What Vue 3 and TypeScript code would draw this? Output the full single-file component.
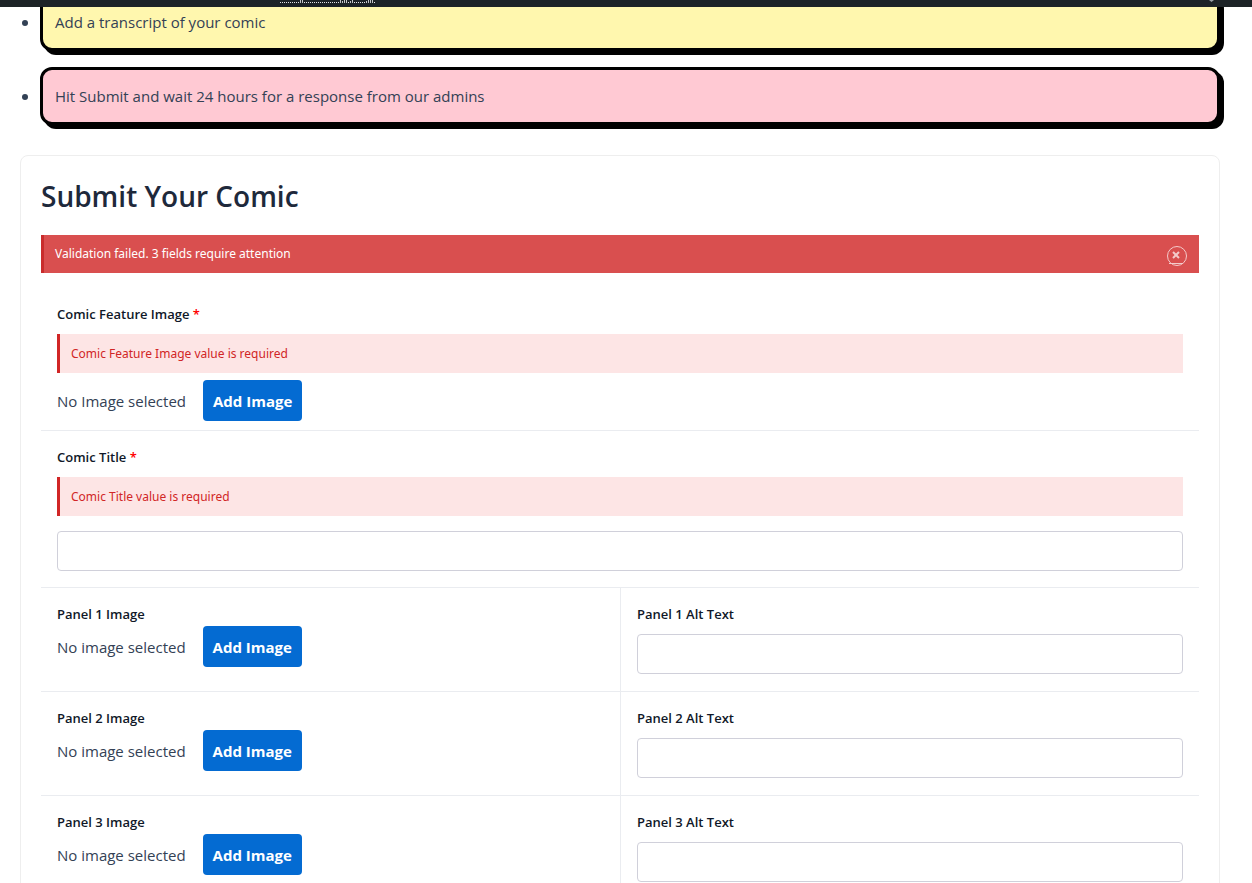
<script setup lang="ts">
import { ref } from 'vue'

interface Step { text: string; tone: string }

const steps: Step[] = [
  { text: 'Add a transcript of your comic', tone: 'yellow' },
  { text: 'Hit Submit and wait 24 hours for a response from our admins', tone: 'pink' },
]
const panels: number[] = [1, 2, 3]
const alertOpen = ref(true)
const title = ref('')
const altTexts = ref<string[]>(['', '', ''])
</script>

<template>
  <div class="page">
    <header class="adminbar">
      <svg class="bar-trace" width="96" height="7" viewBox="0 0 96 7" aria-hidden="true">
        <path d="M0 2.5H96" stroke="#e2e3e5" stroke-dasharray="1 1" />
        <path d="M20.5 0V3M22.5 0V3M60.5 0V3M62.5 1V3M64.5 0V3M66.5 0V3M70.5 1V3M72.5 0V3M86.5 1V3M88.5 0V3M90.5 0V3M92.5 0V3" stroke="#c3c4c7" />
      </svg>
      <svg class="bar-mark" width="5" height="7" viewBox="0 0 5 7" aria-hidden="true">
        <path d="M0 0h5L2.5 2z" fill="#9ca1a7" />
      </svg>
    </header>

    <main class="content">
      <ul class="steps">
        <li v-for="step in steps" :key="step.text" :class="step.tone">{{ step.text }}</li>
      </ul>

      <form class="card" novalidate @submit.prevent>
        <h2>Submit Your Comic</h2>

        <div v-if="alertOpen" class="alert" role="alert">
          <span>Validation failed. 3 fields require attention</span>
          <button type="button" class="dismiss" aria-label="Dismiss" @click="alertOpen = false">
            <svg width="20" height="20" viewBox="0 0 20 20" aria-hidden="true">
              <circle cx="10" cy="10" r="9.5" fill="none" stroke="#fff" />
              <path d="M6 6L12 12M12 6L6 12" stroke="#fff" stroke-width="2" />
              <path d="M2 17.5H16" stroke="#fff" />
            </svg>
          </button>
        </div>

        <div class="fields">
          <div class="field feature">
            <label for="feature">Comic Feature Image <span class="required">*</span></label>
            <p class="error">Comic Feature Image value is required</p>
            <div class="picker">
              <span>No Image selected</span>
              <button id="feature" type="button" class="add">Add Image</button>
            </div>
          </div>

          <div class="field">
            <label for="title">Comic Title <span class="required">*</span></label>
            <p class="error">Comic Title value is required</p>
            <input id="title" v-model="title" class="spaced" type="text" />
          </div>

          <div v-for="(n, i) in panels" :key="n" class="pair">
            <div class="field">
              <label :for="`image-${n}`">Panel {{ n }} Image</label>
              <div class="picker">
                <span>No image selected</span>
                <button :id="`image-${n}`" type="button" class="add">Add Image</button>
              </div>
            </div>
            <div class="field">
              <label :for="`alt-${n}`">Panel {{ n }} Alt Text</label>
              <input :id="`alt-${n}`" v-model="altTexts[i]" type="text" />
            </div>
          </div>
        </div>
      </form>
    </main>
  </div>
</template>

<style>
body {
  margin: 0;
  background: #fff;
}
</style>

<style scoped>
.page {
  height: 100vh;
  overflow: hidden;
  font-family: "Segoe UI", "Open Sans", "Noto Sans", sans-serif;
  font-size: 15px;
  line-height: 24px;
  color: #334155;
}
.page *,
.page {
  box-sizing: border-box;
}
.adminbar {
  position: fixed;
  top: 0;
  left: 0;
  right: 0;
  z-index: 2;
  height: 7px;
  padding: 0 38px 0 280px;
  display: flex;
  justify-content: space-between;
  background: #1d2327;
}
.content {
  display: flow-root;
  padding: 0 32px 0 20px;
}
.steps {
  margin: -7px 0 30px;
  padding: 0 0 0 20px;
  display: grid;
  gap: 16px;
}
.steps li {
  padding: 14px 12px;
  border: 3px solid #000;
  border-radius: 12px;
  box-shadow: 4px 4px 0 #000;
}
.steps li::marker {
  color: #334155;
  font-size: 16px;
}
.yellow {
  background: #fff7ae;
}
.pink {
  background: #ffc9d3;
}
.card {
  padding: 20px;
  border: 1px solid #eeeeee;
  border-radius: 8px;
}
h2 {
  margin: 0 0 19px;
  font-size: 28px;
  font-weight: 600;
  line-height: 40px;
  color: #1e293b;
}
.alert {
  display: flex;
  align-items: center;
  justify-content: space-between;
  height: 38px;
  margin-bottom: 15px;
  padding: 0 12px 0 11px;
  border-left: 3px solid #c92c2c;
  background: #d94f4f;
  color: #fff;
  font-family: "Segoe UI", "Noto Sans", sans-serif;
  font-size: 12px;
}
.dismiss {
  width: 20px;
  height: 24px;
  padding: 4px 0 0;
  border: 0;
  background: none;
  opacity: 0.7;
  cursor: pointer;
}
.dismiss svg {
  display: block;
}
.field {
  padding: 16px;
}
.field + .field {
  border-top: 1px solid #eaecf0;
}
.feature {
  padding-bottom: 9px;
}
label {
  display: block;
  width: fit-content;
  font-size: 13px;
  font-weight: 600;
  line-height: 20px;
  color: #101828;
}
.required {
  color: #f00;
}
.error {
  margin: 10px 0 7px;
  padding: 0 11px;
  border-left: 3px solid #d12626;
  background: #fde5e5;
  color: #d12626;
  font-family: "Segoe UI", "Noto Sans", sans-serif;
  font-size: 12px;
  line-height: 39px;
}
.picker {
  display: flex;
  align-items: center;
  gap: 17px;
}
.add {
  height: 41px;
  padding: 0 10px;
  border: 0;
  border-radius: 4px;
  background: #046bd2;
  color: #fff;
  font-family: inherit;
  font-size: 15px;
  font-weight: 700;
  cursor: pointer;
}
input {
  display: block;
  width: 100%;
  height: 40px;
  margin-top: 10px;
  padding: 0 12px;
  border: 1px solid #d0d0da;
  border-radius: 4px;
  background: #fff;
  font: inherit;
  color: inherit;
}
input.spaced {
  margin-top: 15px;
}
.pair {
  display: grid;
  grid-template-columns: 1fr 1fr;
  min-height: 104px;
  border-top: 1px solid #eaecf0;
}
.pair .field + .field {
  border-top: 0;
  border-left: 1px solid #eaecf0;
}
.pair .picker {
  margin-top: 2px;
}
</style>
